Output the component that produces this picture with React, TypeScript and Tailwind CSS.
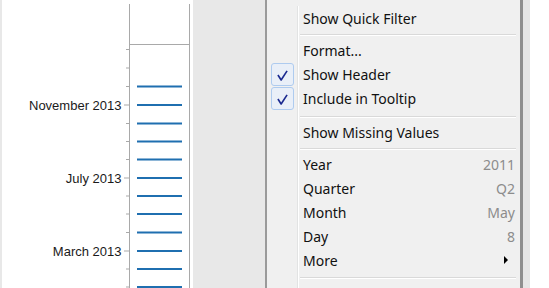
import React from "react";

// tick rows on the date axis (page y coords)
const ticks = [49.5, 68, 86.5, 105, 123.5, 141.5, 159.5, 178, 196, 214, 232.5, 251, 269, 287];
const marks = [86.5, 105, 123.5, 141.5, 159.5, 178, 196, 214, 232.5, 251, 269, 287];
const labels = [
  { y: 105, text: "November 2013" },
  { y: 178, text: "July 2013" },
  { y: 251, text: "March 2013" },
];

type Item = { label: string; value?: string; checked?: boolean; submenu?: boolean };

const groups: Item[][] = [
  [{ label: "Show Quick Filter" }],
  [
    { label: "Format..." },
    { label: "Show Header", checked: true },
    { label: "Include in Tooltip", checked: true },
  ],
  [{ label: "Show Missing Values" }],
  [
    { label: "Year", value: "2011" },
    { label: "Quarter", value: "Q2" },
    { label: "Month", value: "May" },
    { label: "Day", value: "8" },
    { label: "More", submenu: true },
  ],
];

// spacing of each separator, top to bottom
const seps = [
  { h: "h-[8px]", pt: "pt-[4px]" },
  { h: "h-[10px]", pt: "pt-[6px]" },
  { h: "h-[8px]", pt: "pt-[4px]" },
  { h: "h-[9px]", pt: "pt-[5px]" },
];

function Chart() {
  return (
    <svg width={191} height={288} viewBox="2 0 191 288" className="block">
      <line x1={129.5} y1={4} x2={129.5} y2={288} stroke="#a9a9a9" />
      <line x1={189.5} y1={4} x2={189.5} y2={288} stroke="#a9a9a9" />
      <line x1={129} y1={44.5} x2={190} y2={44.5} stroke="#a9a9a9" />
      {ticks.map((y) => {
        const long = labels.some((l) => l.y === y);
        return (
          <line key={y} x1={long ? 124 : 126} y1={y} x2={129} y2={y} stroke="#a9a9a9" />
        );
      })}
      {marks.map((y) => (
        <line key={y} x1={137} y1={y} x2={182} y2={y} stroke="#1f6fb0" strokeWidth={2} />
      ))}
      {labels.map((l) => (
        <text
          key={l.text}
          x={121.5}
          y={l.y}
          textAnchor="end"
          dominantBaseline="central"
          fill="#1a1a1a"
          style={{ fontFamily: '"Liberation Sans", Arial, sans-serif', fontSize: 13 }}
        >
          {l.text}
        </text>
      ))}
    </svg>
  );
}

function Check() {
  return (
    <div className="w-[23px] h-[23px] rounded-[3px] border border-[#aecbef] bg-[#e9eff8] flex items-center justify-center">
      <svg width={23} height={23} viewBox="0 0 23 23">
        <path d="M6.5 12 L10 17.5 L16.5 7.5" fill="none" stroke="#1b2a90" strokeWidth={1.8} strokeLinejoin="round" />
      </svg>
    </div>
  );
}

function Row({ item }: { item: Item }) {
  return (
    <div className="flex h-[24px] shrink-0 items-center">
      <div className="w-[30px] flex justify-center items-center">{item.checked && <Check />}</div>
      <div className="w-[2px] self-stretch bg-[#e2e3e3] border-r border-white" />
      <div className="flex-1 flex items-center pl-[4px] pr-[5px]">
        <span className="flex-1 text-[#111]">{item.label}</span>
        {item.value && <span className="text-[#8c8c8c]">{item.value}</span>}
        {item.submenu && (
          <svg width={4} height={8} viewBox="0 0 4 8" className="mr-[7px]">
            <path d="M0 0 L4 4 L0 8 Z" fill="#000" />
          </svg>
        )}
      </div>
    </div>
  );
}

function Separator({ h, pt }: { h: string; pt: string }) {
  return (
    <div className={`flex shrink-0 ${h}`}>
      <div className="w-[30px]" />
      <div className="w-[2px] bg-[#e2e3e3] border-r border-white" />
      <div className={`flex-1 flex flex-col pl-[1px] pr-[4px] ${pt}`}>
        <div className="h-px bg-[#d9d9d9]" />
        <div className="h-px bg-white" />
      </div>
    </div>
  );
}

export default function App() {
  return (
    <div className="w-[549px] h-[288px] flex overflow-hidden bg-white">
      <div className="w-[2px] bg-[#e8e8e8]" />
      <div className="w-[191px] bg-white">
        <Chart />
      </div>
      <div className="w-[72px] bg-[#e8e8e8]" />
      <div
        className="w-[258px] bg-[#f0f0f0] border-l-2 border-r-[3px] border-l-[#9a9a9a] border-r-[#8f8f8f] flex flex-col pt-[6px] text-[14px] overflow-hidden"
        style={{ fontFamily: '"Noto Sans", "Open Sans", sans-serif' }}
      >
        {groups.map((g, i) => (
          <React.Fragment key={i}>
            {i > 0 && <Separator {...seps[i - 1]} />}
            {g.map((it) => (
              <Row key={it.label} item={it} />
            ))}
          </React.Fragment>
        ))}
        <Separator {...seps[3]} />
        <Row item={{ label: "" }} />
      </div>
      <div className="w-[7px] bg-[#e6e6e6]" />
      <div className="flex-1 bg-white" />
    </div>
  );
}
